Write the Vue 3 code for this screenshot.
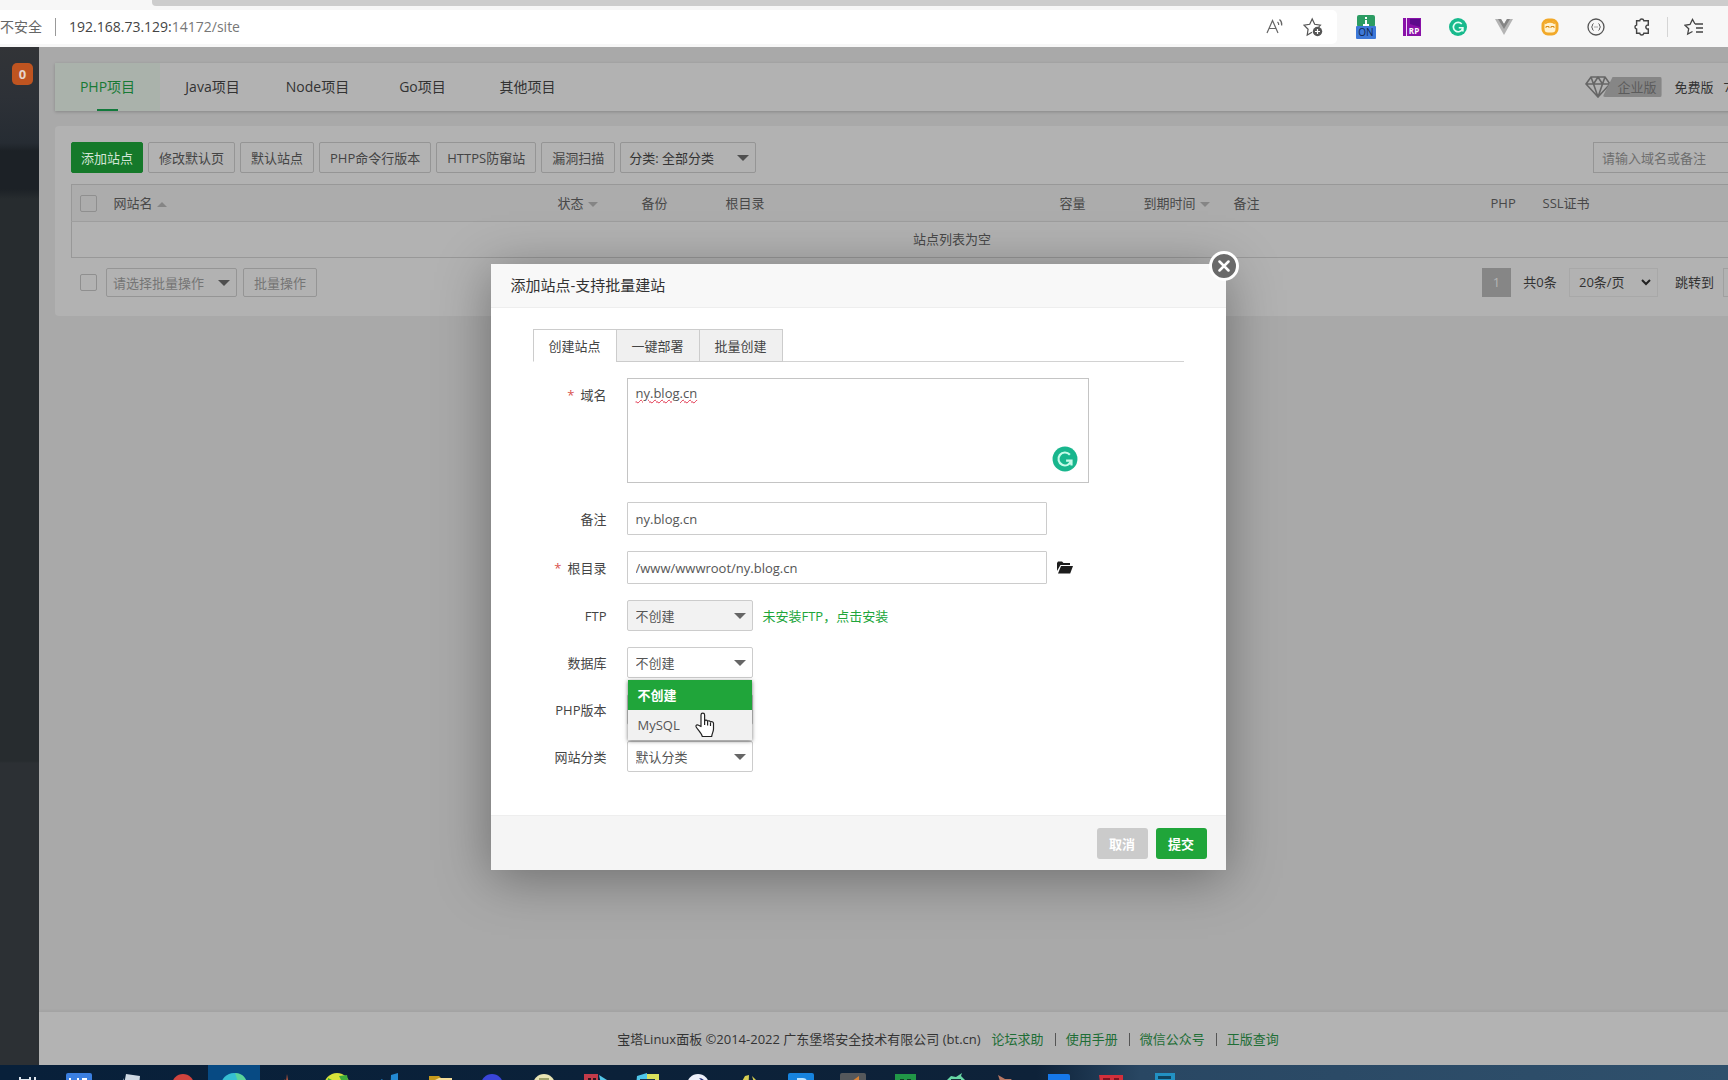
<template>
  <div class="screen">
    <div class="tabStrip">
      <div class="activeTab"></div>
      <div class="otherTabs"></div>
    </div>

    <!-- Browser address bar -->
    <header class="browserBar">
      <div class="addressBar">
        <span class="insecure">不安全</span>
        <span class="addressDivider"></span>
        <span class="url">192.168.73.129:<span class="urlPath">14172/site</span></span>
        <span class="addressIcon">
          <svg viewBox="0 0 20 20" width="20" height="20" fill="none" stroke="#666" stroke-width="1.2">
            <path d="M2 16 7.500 3.500 13 16M4 11.500h7" />
            <path d="M12.500 5c1 .8 1.300 1.800 1.200 3M14.500 2.500c1.900 1.500 2.500 3.500 2.200 6" />
          </svg>
        </span>
        <span class="addressIcon">
          <svg viewBox="0 0 20 20" width="20" height="20" fill="none" stroke="#555" stroke-width="1.200">
            <path d="M9 15.300 4.200 18l.9-5.800L1 8.200l5.700-.9L9.200 2l2.500 5.300 5.700.9-1.700 1.700" />
            <circle cx="14.500" cy="14.500" r="4.700" fill="#555" stroke="none" />
            <path d="M14.500 12v5M12 14.500h5" stroke="#fff" />
          </svg>
        </span>
      </div>
      <div class="extensions">
        <span class="extension">
          <svg viewBox="0 0 22 26" width="22" height="26">
            <rect x="2" y="1" width="18" height="12" rx="2" fill="#2c9c63" />
            <path d="M11 3v2M11 6v6M8 11h6" stroke="#fff" stroke-width="2" />
            <rect x="1" y="12" width="20" height="13" rx="1" fill="#3d78d8" />
            <text x="11" y="22" class="onText">ON</text>
          </svg>
        </span>
        <span class="extension">
          <svg viewBox="0 0 18 18" width="18" height="18">
            <rect width="18" height="18" fill="#8911a8" />
            <path d="M7 1h10v8L7 6z" fill="#5c0a8b" />
            <path d="M3.500 0v18" stroke="#f3d9fa" />
            <text x="11" y="16" class="rpText">RP</text>
          </svg>
        </span>
        <span class="extension">
          <svg viewBox="0 0 24 24" width="18" height="18">
            <circle cx="12" cy="12" r="12" fill="#18ba8d" />
            <path d="M17 8a6.300 6.300 0 1 0 1 6.500M13 13h5.500v5" fill="none" stroke="#e4fff5" stroke-width="2.200" />
          </svg>
        </span>
        <span class="extension">
          <svg viewBox="0 0 18 16" width="18" height="16">
            <path d="M0 0h6l3 5 3-5h6L9 16z" fill="#b4b4b4" />
            <path d="M3 0h3l3 5 3-5h3L9 10z" fill="#858585" />
          </svg>
        </span>
        <span class="extension">
          <svg viewBox="0 0 18 18" width="18" height="18">
            <rect x="2" y="2" width="14" height="14" rx="5" fill="#fff2cf" stroke="#f2a929" stroke-width="3" />
            <path d="M4 5.500c3-2 7-2 10 0" fill="none" stroke="#f2a929" stroke-width="2" />
            <path d="M5 10V8.500h3V10M10 10V8.500h3V10" fill="none" stroke="#d98d18" />
          </svg>
        </span>
        <span class="extension">
          <svg viewBox="0 0 18 18" width="18" height="18" fill="none" stroke="#555">
            <circle cx="9" cy="9" r="8" stroke-width="1.300" />
            <path d="M6.500 5.500c-1.500.5-.5 2.500-2 3.500 1.500 1 .5 3 2 3.500M11.500 5.500c1.500.5.5 2.500 2 3.500-1.500 1-.5 3-2 3.500M7.500 9h1M9.500 9h1" />
          </svg>
        </span>
        <span class="extension">
          <svg viewBox="0 0 20 20" width="18" height="18" fill="none" stroke="#444" stroke-width="1.600">
            <path d="M4 3h3.500a2.300 2.300 0 0 1 4.500 0h5v4.800a2.300 2.300 0 1 0 0 4.500V17h-5a2.300 2.300 0 0 1-4.500 0H4v-4.700a2.300 2.300 0 0 1 0-4.500z" />
          </svg>
        </span>
        <span class="barDivider"></span>
        <span class="extension">
          <svg viewBox="0 0 20 18" width="20" height="18" fill="none" stroke="#444" stroke-width="1.300">
            <path d="M11 6 8.500 1.500 6 6.500l-5 .8 3.700 3.500-1 5.200 4.800-2.500M11 6h8M12 10h7M12 14h7" />
          </svg>
        </span>
      </div>
    </header>

    <div class="panel">
      <aside class="sidebar">
        <span class="badge">0</span>
      </aside>

      <main class="main">
        <div class="content">
          <nav class="projectNav">
            <a
              v-for="(name, index) in projects"
              :key="name"
              href="#"
              :class="['projectTab', { active: index === 0 }]"
            >{{ name }}</a>
            <div class="edition">
              <svg class="diamond" viewBox="0 0 26 22" width="26" height="22" fill="none" stroke="#666" stroke-width="1.600">
                <path d="M6 1h14l5 7-12 13L1 8zM1 8h24M6 1l2.500 7L13 21l4.500-13L20 1M8.500 8 13 1l4.500 7" />
              </svg>
              <span class="enterprise">企业版</span>
              <span class="free">免费版</span>
              <span>7</span>
            </div>
          </nav>

          <section class="card">
            <div class="toolbar">
              <button class="button primary">添加站点</button>
              <button v-for="name in actions" :key="name" class="button">{{ name }}</button>
              <div class="selectBox categoryFilter">
                <select aria-label="分类"><option>分类: 全部分类</option></select>
              </div>
              <input class="search" type="text" placeholder="请输入域名或备注" aria-label="请输入域名或备注" />
            </div>

            <table class="siteTable">
              <colgroup>
                <col v-for="(width, index) in columnWidths" :key="index" :class="`col${width}`" />
                <col />
              </colgroup>
              <thead>
                <tr>
                  <th><input class="check" type="checkbox" aria-label="网站名" /></th>
                  <th v-for="column in columns" :key="column.name">
                    {{ column.name }}<i v-if="column.sort" :class="['sort', column.sort]"></i>
                  </th>
                </tr>
              </thead>
              <tbody>
                <tr><td colspan="10">站点列表为空</td></tr>
              </tbody>
            </table>

            <div class="tableFooter">
              <input class="check" type="checkbox" aria-label="批量操作" />
              <div class="selectBox batchSelect">
                <select aria-label="请选择批量操作"><option>请选择批量操作</option></select>
              </div>
              <button class="button batchButton">批量操作</button>
              <div class="pagination">
                <span class="currentPage">1</span>
                <span class="total">共0条</span>
                <div class="pageSize">
                  <select aria-label="20条/页"><option>20条/页</option></select>
                  <svg viewBox="0 0 10 7" width="10" height="7" fill="none" stroke="#222" stroke-width="2"><path d="m1 1 4 4 4-4" /></svg>
                </div>
                <label class="jump" for="jumpPage">跳转到</label>
                <input id="jumpPage" class="jumpInput" type="text" />
              </div>
            </div>
          </section>
        </div>

        <footer class="pageFooter">
          <span class="copyright">宝塔Linux面板 ©2014-2022 广东堡塔安全技术有限公司 (bt.cn)</span>
          <a v-for="name in footerLinks" :key="name" href="#" class="footerLink">{{ name }}</a>
        </footer>
      </main>

      <!-- Add site dialog -->
      <div class="dialogLayer">
        <form class="dialog" @submit.prevent>
          <button type="button" class="close" aria-label="取消">
            <svg viewBox="0 0 12 12" width="12" height="12" stroke="#fff" stroke-width="2.500" stroke-linecap="round"><path d="m1.500 1.500 9 9M10.500 1.500l-9 9" /></svg>
          </button>
          <h2 class="dialogTitle">添加站点-支持批量建站</h2>

          <div class="dialogBody">
            <div class="tabs">
              <button
                v-for="name in dialogTabs"
                :key="name"
                type="button"
                :class="['tab', { current: currentTab === name }]"
                @click="currentTab = name"
              >{{ name }}</button>
            </div>

            <div class="formRow domainRow">
              <label class="formLabel" for="domain"><i class="required">*</i>域名</label>
              <div class="domainField">
                <textarea id="domain" v-model="form.domain" class="textarea"></textarea>
                <svg class="grammarly" viewBox="0 0 24 24" width="26" height="26">
                  <circle cx="12" cy="12" r="11.500" fill="#18b68d" />
                  <path d="M16.500 8a6 6 0 1 0 1.300 5.500M13 13.500h5v4.500" fill="none" stroke="#c6fbe9" stroke-width="2" />
                </svg>
              </div>
            </div>
            <div class="formRow">
              <label class="formLabel" for="remark">备注</label>
              <input id="remark" v-model="form.remark" class="input" type="text" />
            </div>
            <div class="formRow">
              <label class="formLabel" for="root"><i class="required">*</i>根目录</label>
              <input id="root" v-model="form.root" class="input" type="text" />
              <svg class="folder" viewBox="0 0 16 13" width="16" height="13" fill="#1d1d1d">
                <path d="M0 10V2l1-1.500h4L6.500 2H13v2H3.500z" />
                <path d="M4 5h12l-2.800 7.500H1z" />
              </svg>
            </div>
            <div class="formRow">
              <label class="formLabel" for="ftp">FTP</label>
              <div class="selectBox formSelect disabled">
                <select id="ftp" disabled><option>不创建</option></select>
              </div>
              <a href="#" class="installLink">未安装FTP，点击安装</a>
            </div>
            <div class="formRow">
              <label class="formLabel" for="database">数据库</label>
              <div class="selectBox formSelect">
                <select id="database"><option>不创建</option></select>
                <ul class="options">
                  <li class="option selected">不创建</li>
                  <li class="option">MySQL
                    <svg class="pointer" viewBox="0 0 20 26" width="20" height="26" fill="#fff" stroke="#222" stroke-width="1.200" stroke-linejoin="round">
                      <path d="M6 14.500V3a1.800 1.800 0 0 1 3.600 0v6c.5-1.400 2.800-1 3 .5.600-1.200 2.700-.9 2.900.7.800-1 2.900-.5 3 1.200V17c0 3-1.500 4-1.800 7.500H7.300C6.500 21 2.500 17.500 1.200 15c-.8-1.700 1-2.800 2.400-1.700z" />
                      <path d="M9.600 9v4M12.600 10v3.500M15.500 11v3" />
                    </svg>
                  </li>
                </ul>
              </div>
            </div>
            <div class="formRow">
              <label class="formLabel" for="php">PHP版本</label>
              <div class="selectBox formSelect"><select id="php"></select></div>
            </div>
            <div class="formRow">
              <label class="formLabel" for="category">网站分类</label>
              <div class="selectBox formSelect">
                <select id="category"><option>默认分类</option></select>
              </div>
            </div>
          </div>

          <div class="dialogFooter">
            <button type="button" class="dialogButton cancel">取消</button>
            <button type="submit" class="dialogButton">提交</button>
          </div>
        </form>
      </div>
    </div>

    <!-- Windows taskbar, only the top of the icons shows -->
    <div class="taskbar">
      <div class="taskIcons">
        <span v-for="(icon, index) in taskIcons" :key="index" :class="['task', { open: index === 4 }]">
          <svg viewBox="0 0 26 26" width="26" height="26">
            <path v-for="(shape, n) in icon" :key="n" :d="shape[1]" :fill="shape[0]" />
          </svg>
        </span>
      </div>
    </div>
  </div>
</template>

<script setup>
import { reactive, ref } from 'vue'

const projects = ['PHP项目', 'Java项目', 'Node项目', 'Go项目', '其他项目']
const actions = ['修改默认页', '默认站点', 'PHP命令行版本', 'HTTPS防窜站', '漏洞扫描']
const footerLinks = ['论坛求助', '使用手册', '微信公众号', '正版查询']
const dialogTabs = ['创建站点', '一键部署', '批量创建']
const currentTab = ref('创建站点')

const columnWidths = ['Check', 'Name', 'Small', 'Small', 'Root', 'Small', 'Expire', 'Note', 'Php']
const columns = [
  { name: '网站名', sort: 'up' },
  { name: '状态', sort: 'down' },
  { name: '备份' },
  { name: '根目录' },
  { name: '容量' },
  { name: '到期时间', sort: 'down' },
  { name: '备注' },
  { name: 'PHP' },
  { name: 'SSL证书' }
]

const form = reactive({
  domain: 'ny.blog.cn',
  remark: 'ny.blog.cn',
  root: '/www/wwwroot/ny.blog.cn'
})

const disc = 'M13 0a13 13 0 1 1 0 26a13 13 0 1 1 0-26z'
const smallDisc = 'M13 1a11 11 0 1 1 0 22a11 11 0 1 1 0-22z'
const tile = 'M2 0h22q2 0 2 2v24H0V2q0-2 2-2z'

const taskIcons = [
  [['#dfe6ee', 'M4 4h2v2h8V4h2v22h-2V8H6v18H4zM19 4h2v4h-2zM19 10h2v16h-2z']],
  [['#3b7fe0', tile], ['#fff', 'M3 5h2v14H3zM7 7h2v12H7zM11 5h2v14h-2zM16 5h5v2h-3v12h-2z']],
  [['#cfd9e3', 'M8 1l14 2-2 20H4z'], ['#8fa3b5', 'M6 5l-3 6 4 12z']],
  [['#d0443e', smallDisc]],
  [['#35bfd3', disc], ['#59d39a', 'M14 0c8 0 12 6 12 12h-8z']],
  [['#d05c3c', 'M14 1l3 20-5-2z'], ['#5d3029', 'M11 6l2 1v14z']],
  [['#d8e23a', disc], ['#3fae3b', 'M15 3l8-1 2 10-8-5zM4 5l6 3-7 4z']],
  [['#2389d2', 'M15 2l7-2v26h-8zM2 9l4-3 10 14z']],
  [['#c5991c', 'M2 3h10l3 3v17H2z'], ['#f3dc9a', 'M12 5h13v20H4V9z']],
  [['#3a45db', smallDisc]],
  [['#e9e4b4', smallDisc], ['#9fa36b', 'M8 5h10v2H8z']],
  [['#c43b4a', 'M2 1h14v20H2z'], ['#54c7e8', 'M17 2l8 5v12h-4z'], ['#30171d', 'M6 5h3v3H6zM11 5h3v3h-3z']],
  [['#4fc6e9', 'M3 3l10-3v22H1z'], ['#d8e05c', 'M13 1h12v20H13z'], ['#173249', 'M6 6h15v3H6z']],
  [['#edf0fa', smallDisc], ['#1d2a75', 'M14 5a7 7 0 1 1 0 14 9 9 0 0 0 0-14z']],
  [['#d8cf52', 'M12 2l-4 1-5 9v9h8zM15 3l5 5 1 14z']],
  [['#1683de', tile], ['#b9e3ff', 'M9 5h6q4 0 4 4H9z']],
  [['#55585b', tile], ['#d98334', 'M19 3L8 11h11z']],
  [['#219747', 'M3 1h21v24H3z'], ['#123c25', 'M8 6h4v2H8zM15 6h4v2h-4z']],
  [['#67d7a5', 'M3 8l5-5 5 1 6-4-1 3 5 5v12H3z'], ['#17313c', 'M8 6h10v2H8z']],
  [['#b77763', 'M3 2l7 4h6l3 4-2 11-9-4z']],
  [['#1678ea', 'M2 1h20q2 0 2 2v20H2z']],
  [['#d32f3b', 'M1 2h24v5l-3 2H2z'], ['#7d1421', 'M5 5h7v3H5zM16 5h5v3h-5z']],
  [['#2291c3', 'M5 0h20v25H5z'], ['#d5a63b', 'M1 7h11v14H1z'], ['#0f4460', 'M8 3h13v3H8z']]
]
</script>

<style>
body {
  background: #a9a9a9;
}
</style>

<style scoped>
* {
  box-sizing: border-box;
}

.screen {
  min-height: 100vh;
  display: flex;
  flex-direction: column;
  overflow: hidden;
  font-family: "Open Sans", "Noto Sans CJK SC", sans-serif;
  font-size: 13px;
  line-height: 20px;
  color: #333;
}

button,
input,
select,
textarea {
  font: inherit;
  color: inherit;
}

a {
  text-decoration: none;
}

.tabStrip {
  display: flex;
  height: 7px;
  background: #f7f7f7;
}

.activeTab {
  width: 152px;
}

.otherTabs {
  flex: 1;
  height: 6px;
  background: #cdcdcd;
  border-bottom-left-radius: 4px;
}

.browserBar {
  display: flex;
  height: 40px;
  background: #f7f7f7;
  font-size: 14px;
}

.addressBar {
  flex: 1;
  display: flex;
  align-items: center;
  margin: 3px 0;
  padding-right: 14px;
  gap: 18px;
  background: #fff;
  border-radius: 0 5px 5px 0;
}

.insecure {
  color: #666;
  margin-right: -5px;
}

.addressDivider {
  width: 1px;
  height: 18px;
  background: #999;
  margin-right: -5px;
}

.url {
  flex: 1;
  color: #444;
}

.urlPath {
  color: #777;
}

.addressIcon,
.extension {
  display: flex;
  align-items: center;
  justify-content: center;
}

.extensions {
  display: flex;
  align-items: center;
  padding: 0 11px 0 6px;
}

.extension {
  width: 46px;
}

.barDivider {
  width: 1px;
  height: 20px;
  margin: 0 3px 0 2px;
  background: #d5d5d5;
}

.onText {
  font-size: 10px;
  text-anchor: middle;
  fill: #10264f;
}

.rpText {
  font-size: 8px;
  font-weight: 700;
  text-anchor: middle;
  fill: #fff;
}

.panel {
  flex: 1;
  display: flex;
  position: relative;
  background: #a9a9a9;
}

.sidebar {
  width: 39px;
  flex-shrink: 0;
  padding: 16px 6px;
  display: flex;
  justify-content: flex-end;
  align-items: flex-start;
  background: linear-gradient(#323437 0, #2d3137 50px, #262c33 96px, #1c2126 104px, #1c2126 142px, #272c2f 152px, #272c2f 714px, #2c3034 716px);
}

.badge {
  width: 21px;
  line-height: 22px;
  border-radius: 5px;
  background: #bf5420;
  color: #e6d5cb;
  font-weight: 700;
  text-align: center;
}

.main {
  flex: 1;
  min-width: 0;
  display: flex;
  flex-direction: column;
}

/* the panel is wider than the window and runs off its right edge */
.content {
  flex: 1;
  width: calc(100% + 121px);
  padding: 16px 0 0 16px;
}

.projectNav {
  display: flex;
  height: 48px;
  background: #b2b2b2;
  box-shadow: 0 1px 3px rgba(0, 0, 0, 0.2);
  font-size: 14px;
}

.projectTab {
  width: 105px;
  line-height: 48px;
  text-align: center;
  color: #333;
}

.projectTab.active {
  position: relative;
  color: #187a35;
  background: #aab2ab;
}

.projectTab.active::after {
  content: "";
  position: absolute;
  left: 42px;
  bottom: 0;
  width: 21px;
  height: 2px;
  background: #127a3c;
}

.edition {
  margin-left: auto;
  padding-right: 118px;
  display: flex;
  align-items: center;
  font-size: 13px;
}

.diamond {
  position: relative;
}

.enterprise {
  margin-left: -8px;
  padding: 0 5px 0 15px;
  background: #868686;
  color: #5c5c5c;
  border-radius: 2px;
  clip-path: polygon(10px 0, 100% 0, 100% 100%, 0 100%);
}

.free {
  margin: 0 10px 0 13px;
}

.card {
  margin-top: 15px;
  padding: 16px 16px 19px;
  background: #b2b2b2;
  border-radius: 4px;
}

.toolbar {
  display: flex;
  gap: 5px;
}

.button {
  height: 31px;
  padding: 0 10px;
  border: 1px solid #959595;
  border-radius: 2px;
  background: transparent;
  color: #444;
  white-space: nowrap;
}

.button.primary {
  padding: 0 9px;
  background: #15792a;
  border-color: #15792a;
  color: #d3e5d6;
}

.selectBox {
  position: relative;
  height: 31px;
  border: 1px solid #959595;
  border-radius: 2px;
}

.selectBox select {
  appearance: none;
  width: 100%;
  height: 100%;
  padding: 0 8px;
  border: 0;
  background: transparent;
  opacity: 1;
}

.selectBox::after {
  content: "";
  position: absolute;
  top: 50%;
  right: 6px;
  margin-top: -3px;
  border: 6px solid transparent;
  border-top-color: #4f4f4f;
  border-bottom: 0;
  pointer-events: none;
}

.categoryFilter {
  width: 136px;
}

.search {
  width: 240px;
  height: 31px;
  margin-left: auto;
  padding: 0 8px;
  border: 1px solid #959595;
  background: transparent;
}

.search::placeholder {
  color: #6e6e6e;
}

.siteTable {
  width: 100%;
  margin-top: 11px;
  table-layout: fixed;
  border-collapse: collapse;
  border: 1px solid #989898;
}

.colCheck { width: 34px; }
.colName { width: 444px; }
.colSmall { width: 84px; }
.colRoot { width: 334px; }
.colExpire { width: 90px; }
.colNote { width: 257px; }
.colPhp { width: 52px; }

.siteTable th {
  height: 37px;
  padding: 0 8px;
  background: #acacac;
  border-bottom: 1px solid #9e9e9e;
  color: #484848;
  font-weight: 400;
  text-align: left;
  white-space: nowrap;
}

.siteTable td {
  height: 36px;
  padding: 0 0 2px;
  text-align: center;
  color: #484848;
}

.sort {
  display: inline-block;
  margin-left: 4px;
  vertical-align: middle;
  border: 5px solid transparent;
}

.sort.up {
  border-top: 0;
  border-bottom-color: #858585;
}

.sort.down {
  border-bottom: 0;
  border-top-color: #858585;
}

.check {
  appearance: none;
  display: block;
  flex-shrink: 0;
  width: 17px;
  height: 17px;
  margin: 0;
  border: 1px solid #8f8f8f;
  border-radius: 2px;
}

.tableFooter {
  display: flex;
  align-items: center;
  margin-top: 10px;
  padding-left: 9px;
}

.batchSelect {
  width: 131px;
  height: 29px;
  margin: 0 6px 0 9px;
  color: #757575;
}

.batchSelect select {
  padding: 0 6px;
}

.batchButton {
  height: 29px;
  color: #757575;
}

.pagination {
  display: flex;
  align-items: center;
  margin-left: auto;
  line-height: 29px;
}

.currentPage {
  width: 29px;
  text-align: center;
  background: #868686;
  color: #b5b5b5;
}

.total {
  width: 58px;
  text-align: center;
}

.pageSize {
  display: flex;
  align-items: center;
  width: 89px;
  height: 29px;
  padding-right: 6px;
  border: 1px solid #a8a8a8;
}

.pageSize select {
  appearance: none;
  flex: 1;
  min-width: 0;
  padding: 0 0 0 9px;
  border: 0;
  background: transparent;
}

.jump {
  margin: 0 9px 0 17px;
}

.jumpInput {
  width: 110px;
  height: 29px;
  border: 1px solid #a0a0a0;
  background: transparent;
}

.pageFooter {
  display: flex;
  justify-content: center;
  padding: 17px 0 16px 140px;
  background: #b3b3b3;
  box-shadow: 0 -1px 3px rgba(0, 0, 0, 0.06);
}

.footerLink {
  padding: 0 11px;
  color: #1e6e36;
  position: relative;
}

.footerLink + .footerLink::before {
  content: "";
  position: absolute;
  left: 0;
  top: 4px;
  height: 13px;
  border-left: 1px solid #555;
}

.dialogLayer {
  position: absolute;
  inset: 0;
  display: flex;
  justify-content: center;
  align-items: flex-start;
  padding: 217px 12px 0 0;
}

.dialog {
  position: relative;
  width: 735px;
  background: #fff;
  box-shadow: 0 8px 50px rgba(0, 0, 0, 0.36);
}

.close {
  position: absolute;
  top: -13px;
  right: -13px;
  width: 30px;
  height: 30px;
  padding: 0;
  display: grid;
  place-items: center;
  border: 3px solid #fff;
  border-radius: 50%;
  background: #6a6a6a;
}

.dialogTitle {
  margin: 0;
  padding: 0 20px;
  font-size: 15px;
  font-weight: 400;
  line-height: 43px;
  background: #f8f8f8;
  border-bottom: 1px solid #eee;
}

.dialogBody {
  display: flex;
  flex-direction: column;
  gap: 16px;
  padding: 21px 42px 43px;
}

.tabs {
  display: flex;
  border-bottom: 1px solid #d2d2d2;
}

.tab {
  width: 84px;
  height: 33px;
  margin: 0 -1px -1px 0;
  padding: 0;
  border: 1px solid #ccc;
  background: #f0f0f0;
  color: #444;
}

.tab.current {
  background: #fff;
  border-bottom-color: #fff;
}

.formRow {
  display: flex;
  align-items: center;
}

.formLabel {
  width: 74px;
  margin-right: 20px;
  text-align: right;
  white-space: nowrap;
  color: #444;
}

.required {
  margin-right: 6px;
  font-style: normal;
  color: #d9534f;
}

.domainRow {
  align-items: flex-start;
  padding-bottom: 3px;
}

.domainRow .formLabel {
  padding-top: 7px;
}

.domainField {
  position: relative;
  width: 462px;
}

.textarea {
  display: block;
  width: 100%;
  height: 105px;
  padding: 4px 8px;
  border: 1px solid #c4c4c4;
  outline: none;
  resize: none;
  color: #555;
  text-decoration: underline wavy 1px #e0304a;
}

.grammarly {
  position: absolute;
  right: 11px;
  bottom: 11px;
}

.input {
  width: 420px;
  height: 33px;
  padding: 0 8px;
  border: 1px solid #ccc;
  border-radius: 1px;
  color: #555;
}

.folder {
  margin-left: 10px;
}

.formSelect {
  width: 126px;
  border-color: #ccc;
  color: #555;
}

.formSelect::after {
  border-top-color: #666;
}

.formSelect.disabled {
  background: #f2f2f2;
}

.installLink {
  margin-left: 10px;
  color: #20a53a;
}

.options {
  position: absolute;
  z-index: 1;
  top: 32px;
  left: 0;
  right: 0;
  margin: 0;
  padding: 0;
  list-style: none;
  background: #f1f1f1;
  box-shadow: 0 1px 4px rgba(0, 0, 0, 0.55);
}

.option {
  position: relative;
  padding: 5px 10px;
  line-height: 20px;
}

.option.selected {
  background: #20a53a;
  color: #fff;
  font-weight: 700;
}

.pointer {
  position: absolute;
  left: 67px;
  top: 2px;
}

.dialogFooter {
  display: flex;
  justify-content: flex-end;
  gap: 8px;
  padding: 12px 19px 11px;
  background: #f5f5f5;
  border-top: 1px solid #eee;
}

.dialogButton {
  width: 51px;
  height: 31px;
  padding: 0;
  border: 0;
  border-radius: 3px;
  background: #20a53a;
  color: #fff;
  font-weight: 700;
}

.dialogButton.cancel {
  background: #cbcbcb;
}

.taskbar {
  height: 15px;
  overflow: hidden;
  background: linear-gradient(90deg, #08203a, #0b2139 35%, #0e2239 60%, #294763 66%, #2f506c);
}

.taskIcons {
  display: flex;
  width: 69%;
  padding: 0 4px 0 2px;
}

.task {
  flex: 1;
  display: flex;
  justify-content: center;
  padding-top: 8px;
}

.task.open {
  background: #074a83;
}
</style>
